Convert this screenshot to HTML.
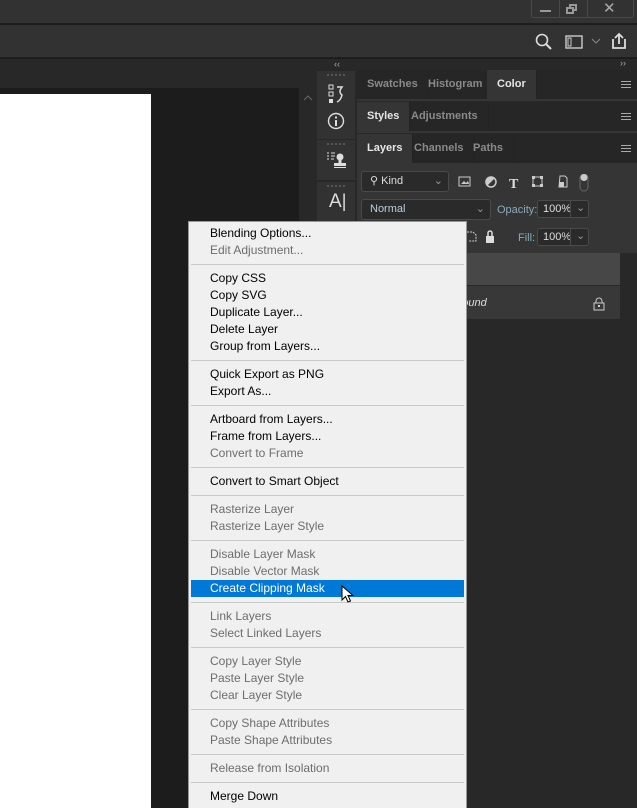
<!DOCTYPE html>
<html><head><style>
*{margin:0;padding:0;box-sizing:border-box}
html{width:637px;height:808px;overflow:hidden}
body{width:637px;height:808px;overflow:hidden;background:#1c1c1c;font-family:"Liberation Sans",sans-serif;position:relative}
.a{position:absolute}
.tab{position:absolute;top:0;height:29px;line-height:28px;font-size:11px;font-weight:bold;color:#8a8a8a;padding:0 10px;border-right:1px solid #232323}
.tab.on{background:#353535;color:#e6e6e6}
.ham{position:absolute;right:6px;top:11px;width:10px;height:7px;border-top:1px solid #aaa;border-bottom:1px solid #aaa}
.ham:after{content:"";position:absolute;left:0;right:0;top:2px;border-top:1px solid #aaa}
.box{position:absolute;border:1px solid #4a4a4a;border-radius:3px;background:#2a2a2a;color:#ddd;font-size:11px}
.menu{position:absolute;left:188px;top:221px;width:279px;height:587px;overflow:hidden;background:#f0f0f0;border:1px solid #979797;border-bottom:none;padding-top:3px}
.it{height:17px;line-height:17px;font-size:12px;padding-left:19px;color:#000;margin:0 2px;white-space:nowrap}
.it.d{color:#6d6d6d}
.it.h{background:#0078d7;color:#fff}
.sp{height:11px;position:relative;margin:0 2px}
.sp:after{content:"";position:absolute;left:0;right:0;top:5px;border-top:1px solid #c8c8c8}
</style></head><body>
<div class="a" style="left:0;top:0;width:637px;height:24px;background:#323232;border-bottom:1px solid #1e1e1e"></div>
<div class="a" style="left:531px;top:-1px;width:103px;height:19px;border:1px solid #4a4a4a;border-radius:0 0 3px 3px"></div>
<div class="a" style="left:559px;top:-1px;width:1px;height:19px;background:#4a4a4a"></div>
<div class="a" style="left:587px;top:-1px;width:1px;height:19px;background:#4a4a4a"></div>
<div class="a" style="left:540px;top:10px;width:11px;height:2px;background:#999"></div>
<div class="a" style="left:569px;top:4px;width:8px;height:7px;border:2px solid #999"></div>
<div class="a" style="left:566px;top:7px;width:8px;height:7px;border:2px solid #999;background:#323232"></div>
<div class="a" style="left:603px;top:-1px;color:#aaa;font-size:15px">✕</div>
<div class="a" style="left:0;top:25px;width:637px;height:33px;background:#323232;border-bottom:1px solid #1e1e1e"></div>
<svg class="a" style="left:535px;top:33px" width="18" height="18"><circle cx="7" cy="7" r="5.5" fill="none" stroke="#ddd" stroke-width="1.6"/><path d="M11 11L16 16" stroke="#ddd" stroke-width="2"/></svg>
<svg class="a" style="left:565px;top:35px" width="18" height="14"><rect x="1" y="1" width="16" height="12" fill="none" stroke="#ccc" stroke-width="1.4"/><rect x="3" y="3" width="3" height="8" fill="none" stroke="#ccc"/></svg>
<svg class="a" style="left:591px;top:38px" width="10" height="6"><path d="M1 1L5 5L9 1" fill="none" stroke="#888"/></svg>
<svg class="a" style="left:610px;top:32px" width="18" height="18"><path d="M3 7V16H15V7" fill="none" stroke="#ddd" stroke-width="1.8"/><path d="M9 12V2M5 6L9 2L13 6" fill="none" stroke="#ddd" stroke-width="1.8"/></svg>
<div class="a" style="left:0;top:59px;width:316px;height:29px;background:#282828"></div>
<div class="a" style="left:0;top:94px;width:151px;height:714px;background:#fff"></div>
<div class="a" style="left:299px;top:88px;width:17px;height:720px;background:#282828"></div>
<svg class="a" style="left:303px;top:95px" width="10" height="6"><path d="M1 5L5 1L9 5" fill="none" stroke="#666"/></svg>
<div class="a" style="left:316px;top:59px;width:321px;height:749px;background:#282828"></div>
<div class="a" style="left:334px;top:59px;color:#aaa;font-size:9px">‹‹</div>
<div class="a" style="left:317px;top:71px;width:38px;height:68px;background:#323232"></div>
<div class="a" style="left:317px;top:140px;width:38px;height:40px;background:#323232"></div>
<div class="a" style="left:317px;top:182px;width:38px;height:626px;background:#323232"></div>
<div class="a" style="left:327px;top:74px;width:18px;border-top:2px dotted #555"></div>
<div class="a" style="left:327px;top:143px;width:18px;border-top:2px dotted #555"></div>
<div class="a" style="left:327px;top:185px;width:18px;border-top:2px dotted #555"></div>
<svg class="a" style="left:328px;top:84px" width="18" height="20"><rect x="1" y="1" width="4" height="4" fill="none" stroke="#ddd"/><rect x="1" y="8" width="4" height="4" fill="none" stroke="#ddd"/><rect x="1" y="15" width="4" height="4" fill="#ddd"/><path d="M9 3H14Q10 8 14 11Q13 16 9 18" fill="none" stroke="#ddd" stroke-width="1.5"/></svg>
<svg class="a" style="left:327px;top:112px" width="18" height="18"><circle cx="9" cy="9" r="7.5" fill="none" stroke="#ddd" stroke-width="1.4"/><rect x="8" y="8" width="2" height="6" fill="#ddd"/><rect x="8" y="4.5" width="2" height="2" fill="#ddd"/></svg>
<svg class="a" style="left:326px;top:151px" width="22" height="18"><path d="M1 2h2M5 2h4M1 5h2M5 5h4M1 8h2M5 8h3" stroke="#ddd"/><circle cx="14" cy="6" r="3.5" fill="#ddd"/><rect x="12.5" y="9" width="3" height="3" fill="#ddd"/><rect x="8" y="12" width="12" height="3" fill="#ddd"/><rect x="8" y="16" width="12" height="1" fill="#ddd"/></svg>
<div class="a" style="left:329px;top:191px;color:#ddd;font-size:19px">A<span style="font-size:18px">|</span></div>
<div class="a" style="left:357px;top:59px;width:280px;height:11px;background:#282828"></div>
<div class="a" style="left:620px;top:58px;color:#aaa;font-size:9px">››</div>
<div class="a" style="left:357px;top:70px;width:280px;height:29px;background:#262626">
 <div class="tab" style="left:0">Swatches</div><div class="tab" style="left:61px">Histogram</div><div class="tab on" style="left:130px">Color</div><div class="ham"></div></div>
<div class="a" style="left:357px;top:99px;width:280px;height:2px;background:#353535"></div>
<div class="a" style="left:357px;top:102px;width:280px;height:29px;background:#262626">
 <div class="tab on" style="left:0">Styles</div><div class="tab" style="left:44px">Adjustments</div><div class="ham"></div></div>
<div class="a" style="left:357px;top:131px;width:280px;height:2px;background:#353535"></div>
<div class="a" style="left:357px;top:134px;width:280px;height:29px;background:#262626">
 <div class="tab on" style="left:0">Layers</div><div class="tab" style="left:47px">Channels</div><div class="tab" style="left:106px">Paths</div><div class="ham"></div></div>
<div class="a" style="left:357px;top:163px;width:280px;height:90px;background:#353535"></div>
<div class="box" style="left:361px;top:171px;width:88px;height:21px;line-height:19px;padding-left:8px">⚲ Kind<span style="position:absolute;right:5px;color:#999">⌄</span></div>
<svg class="a" style="left:458px;top:174px" width="160" height="20"><rect x="1" y="3" width="11" height="9" fill="none" stroke="#ccc"/><path d="M3 10l3-3 2 2 2-2 1 3z" fill="#ccc"/><circle cx="33" cy="8" r="5" fill="none" stroke="#ccc" stroke-width="1.5"/><path d="M29 12A5 5 0 0 1 37 4Z" fill="#ccc"/><text x="51" y="14" fill="#ddd" font-size="14" font-weight="bold" font-family="Liberation Serif">T</text><rect x="75" y="3" width="9" height="9" fill="none" stroke="#ccc"/><rect x="74" y="2" width="3" height="3" fill="#ccc"/><rect x="82" y="2" width="3" height="3" fill="#ccc"/><rect x="74" y="10" width="3" height="3" fill="#ccc"/><rect x="82" y="10" width="3" height="3" fill="#ccc"/><path d="M102 2h5l2 2v9h-8z" fill="none" stroke="#ccc"/><rect x="101" y="8" width="5" height="5" fill="#ccc"/><rect x="122" y="0" width="8" height="17" rx="4" fill="none" stroke="#666"/><circle cx="126" cy="3.5" r="3.5" fill="#ccc"/></svg>
<div class="box" style="left:361px;top:199px;width:130px;height:21px;line-height:19px;padding-left:8px;color:#bcd">Normal<span style="position:absolute;right:5px;color:#999">⌄</span></div>
<div class="a" style="left:497px;top:204px;font-size:11px;color:#8ab">Opacity:</div>
<div class="box" style="left:537px;top:200px;width:52px;height:18px;line-height:16px;padding-left:5px">100%<span style="position:absolute;left:32px;top:-1px;height:18px;border-left:1px solid #4a4a4a;padding-left:5px;color:#999">⌄</span></div>
<svg class="a" style="left:465px;top:230px" width="32" height="14"><path d="M2 2h6l3 3v6H4" fill="none" stroke="#ccc" stroke-dasharray="2 1"/><rect x="21" y="6" width="8" height="7" fill="#ddd"/><path d="M23 6V3a2 2 0 0 1 4 0V6" fill="none" stroke="#ddd" stroke-width="1.5"/></svg>
<div class="a" style="left:518px;top:232px;font-size:11px;color:#8ab">Fill:</div>
<div class="box" style="left:537px;top:228px;width:52px;height:18px;line-height:16px;padding-left:5px">100%<span style="position:absolute;left:32px;top:-1px;height:18px;border-left:1px solid #4a4a4a;padding-left:5px;color:#999">⌄</span></div>
<div class="a" style="left:357px;top:253px;width:263px;height:32px;background:#474747"></div>
<div class="a" style="left:357px;top:286px;width:263px;height:33px;background:#383838"></div>
<div class="a" style="left:428px;top:297px;font-size:11px;font-style:italic;color:#ddd">Background</div>
<svg class="a" style="left:592px;top:297px" width="14" height="14"><rect x="2" y="6" width="10" height="7" fill="none" stroke="#ccc"/><path d="M4 6V4a3 3 0 0 1 6 0V6" fill="none" stroke="#ccc"/><rect x="6" y="8" width="2" height="2" fill="#ccc"/></svg>
<div class="menu">
<div class="it">Blending Options...</div>
<div class="it d">Edit Adjustment...</div>
<div class="sp"></div>
<div class="it">Copy CSS</div>
<div class="it">Copy SVG</div>
<div class="it">Duplicate Layer...</div>
<div class="it">Delete Layer</div>
<div class="it">Group from Layers...</div>
<div class="sp"></div>
<div class="it">Quick Export as PNG</div>
<div class="it">Export As...</div>
<div class="sp"></div>
<div class="it">Artboard from Layers...</div>
<div class="it">Frame from Layers...</div>
<div class="it d">Convert to Frame</div>
<div class="sp"></div>
<div class="it">Convert to Smart Object</div>
<div class="sp"></div>
<div class="it d">Rasterize Layer</div>
<div class="it d">Rasterize Layer Style</div>
<div class="sp"></div>
<div class="it d">Disable Layer Mask</div>
<div class="it d">Disable Vector Mask</div>
<div class="it h">Create Clipping Mask</div>
<div class="sp"></div>
<div class="it d">Link Layers</div>
<div class="it d">Select Linked Layers</div>
<div class="sp"></div>
<div class="it d">Copy Layer Style</div>
<div class="it d">Paste Layer Style</div>
<div class="it d">Clear Layer Style</div>
<div class="sp"></div>
<div class="it d">Copy Shape Attributes</div>
<div class="it d">Paste Shape Attributes</div>
<div class="sp"></div>
<div class="it d">Release from Isolation</div>
<div class="sp"></div>
<div class="it">Merge Down</div>
<div class="it">Merge Visible</div>
</div>
<svg class="a" style="left:341px;top:585px" width="14" height="20"><path d="M1 1V15L4.5 11.5L7 17L9.5 16L7 10.5H12Z" fill="#fff" stroke="#000" stroke-width="1"/></svg>
</body></html>
